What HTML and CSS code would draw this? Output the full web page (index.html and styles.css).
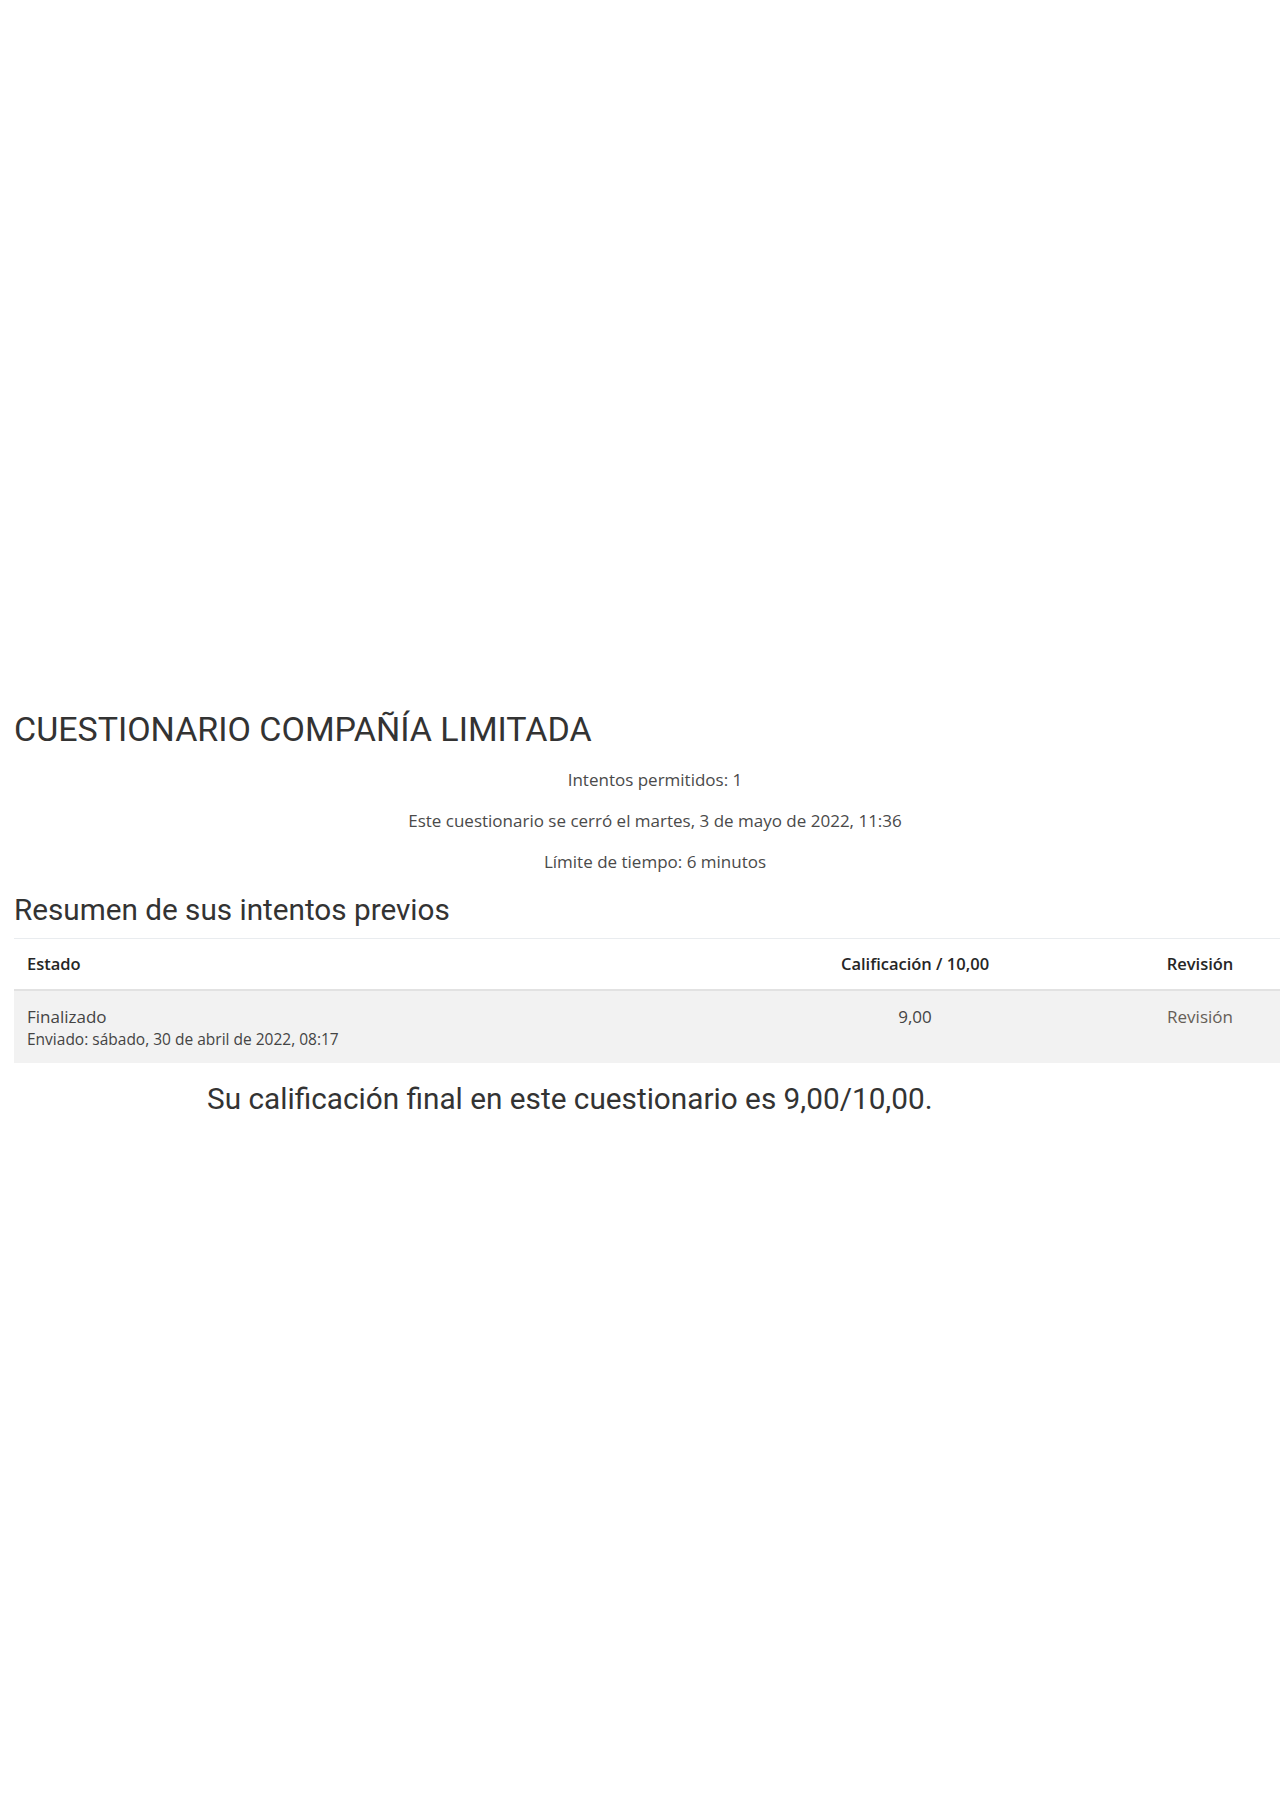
FILE: index.html
```html
<!DOCTYPE html>
<html lang="es">
<head>
<meta charset="utf-8">
<title>CUESTIONARIO COMPAÑÍA LIMITADA</title>
<link rel="stylesheet" href="styles.css">
</head>
<body>
<div class="page">
  <h1 class="quiz-title">CUESTIONARIO COMPAÑÍA LIMITADA</h1>
  <div class="quizinfo">
    <p>Intentos permitidos: 1</p>
    <p>Este cuestionario se cerró el martes, 3 de mayo de 2022, 11:36</p>
    <p>Límite de tiempo: 6 minutos</p>
  </div>
  <h2 class="summary-title">Resumen de sus intentos previos</h2>
  <table class="attempts">
    <colgroup>
      <col class="col-state">
      <col class="col-grade">
      <col class="col-review">
    </colgroup>
    <thead>
      <tr>
        <th class="c-left">Estado</th>
        <th class="c-center">Calificación / 10,00</th>
        <th class="c-center">Revisión</th>
      </tr>
    </thead>
    <tbody>
      <tr>
        <td class="c-left">
          <div class="state">Finalizado</div>
          <div class="submitted">Enviado: sábado, 30 de abril de 2022, 08:17</div>
        </td>
        <td class="c-center">9,00</td>
        <td class="c-center"><a class="review-link" href="#">Revisión</a></td>
      </tr>
    </tbody>
  </table>
  <p class="final-grade">Su calificación final en este cuestionario es 9,00/10,00.</p>
</div>
</body>
</html>
```

FILE: styles.css
```css
html, body {
  margin: 0;
  padding: 0;
  background: #ffffff;
}

body {
  font-family: "Open Sans", "Liberation Sans", sans-serif;
  color: #373a3c;
}

.page {
  padding: 709px 0 600px 14px;
}

.quiz-title {
  margin: 0;
  font-family: Roboto, "Liberation Sans", sans-serif;
  font-weight: 400;
  font-size: 34px;
  line-height: 40px;
  color: #333333;
}

.quizinfo {
  margin-top: 19px;
  padding-left: 16px;
  text-align: center;
  color: #4a4a4a;
  font-size: 17px;
  line-height: 24px;
}

.quizinfo p {
  margin: 0 0 17px 0;
}

.quizinfo p:last-child {
  margin-bottom: 0;
}

.summary-title {
  margin: 18px 0 10px 0;
  font-family: Roboto, "Liberation Sans", sans-serif;
  font-weight: 400;
  font-size: 29.7px;
  line-height: 36px;
  color: #333333;
}

.attempts {
  width: 100%;
  border-collapse: collapse;
  font-size: 17px;
  line-height: 24px;
}

.col-state { width: 696px; }
.col-grade { width: 410px; }
.col-review { width: 160px; }

.attempts th {
  font-weight: 600;
  font-size: 16.5px;
  color: #262626;
  padding: 13px 13px 13px 13px;
  border-top: 1px solid #e9ecef;
  border-bottom: 2px solid #e2e2e2;
  vertical-align: middle;
}

.attempts td {
  background: #f2f2f2;
  padding: 14px 13px 14px 13px;
  vertical-align: top;
  color: #444444;
}

.c-left { text-align: left; }
.c-center { text-align: center; }

.state {
  font-size: 17px;
  line-height: 24px;
}

.submitted {
  font-size: 15.5px;
  line-height: 20px;
}

.review-link {
  color: #665e57;
  text-decoration: none;
}

.final-grade {
  margin: 18px 0 0 193px;
  font-family: Roboto, "Liberation Sans", sans-serif;
  font-size: 29.75px;
  line-height: 36px;
  color: #333333;
}
```
